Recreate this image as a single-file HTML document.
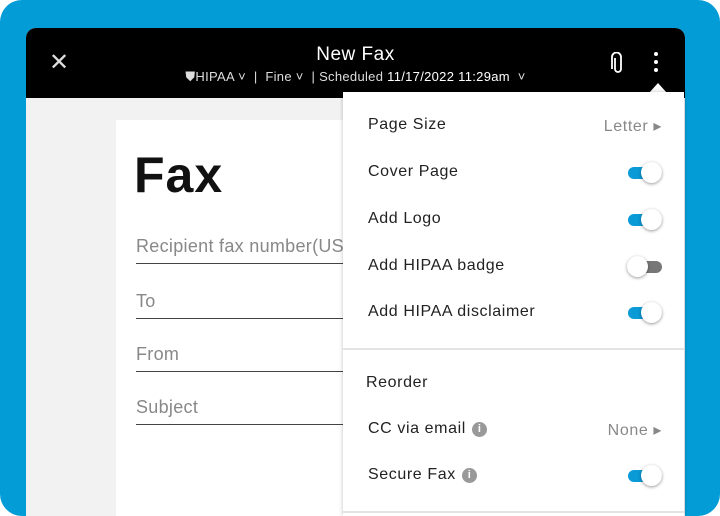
<!DOCTYPE html>
<html><head><style>
*{margin:0;padding:0;box-sizing:border-box}
html,body{width:720px;height:516px;overflow:hidden}
body{background:#fff;font-family:"Liberation Sans",sans-serif;position:relative}
.blue{position:absolute;left:0;top:0;width:720px;height:516px;background:#039cd6;border-radius:22px}
.win{position:absolute;left:26px;top:28px;width:659px;height:488px;background:#f2f2f2;border-radius:10px 10px 0 0;overflow:hidden}
.hdr{position:absolute;left:0;top:0;width:659px;height:70px;background:#000;color:#fff}
.title{position:absolute;left:0;width:659px;top:16px;text-align:center;font-size:19px;letter-spacing:.5px}
.sub{position:absolute;left:0;width:659px;top:41px;text-align:center;font-size:13px;color:#ddd;letter-spacing:.3px}
.paper{position:absolute;left:90px;top:92px;width:240px;height:396px;background:#fff}
.fax{position:absolute;left:18px;top:26px;font-size:50px;font-weight:bold;color:#111;letter-spacing:1px}
.fld{position:absolute;left:20px;width:230px;border-bottom:1px solid #444;font-size:18px;color:#888;padding-bottom:6px;letter-spacing:.3px;white-space:nowrap;overflow:hidden}
.menu{position:absolute;left:343px;top:92px;width:341px;height:424px;background:#fff;box-shadow:0 0 4px rgba(0,0,0,.25)}
.row{position:absolute;left:25px;right:22px;font-size:16px;color:#222;letter-spacing:.6px}
.row .r{position:absolute;right:0;top:0;color:#888}
.tg{position:absolute;right:0;top:-1px;width:34px;height:21px}
.tg .t{position:absolute;left:0;top:5px;width:34px;height:12px;border-radius:6px;background:#0a9ad6}
.tg .k{position:absolute;left:13px;top:0;width:21px;height:21px;border-radius:50%;background:#fff;box-shadow:0 1px 3px rgba(0,0,0,.4)}
.tg.off .t{background:#777}
.tg.off .k{left:-1px}
.i{display:inline-block;width:15px;height:15px;border-radius:50%;background:#999;color:#fff;font-size:11px;text-align:center;line-height:15px;font-weight:bold;vertical-align:1px;margin-left:6px;letter-spacing:0}
.hr{position:absolute;left:0;width:341px;height:2px;background:#e3e3e3}
</style></head><body>
<div class="blue"></div>
<div class="win">
 <div class="hdr">
  <div style="position:absolute;left:23px;top:20px;font-size:24px;color:#ddd">✕</div>
  <div class="title">New Fax</div>
  <div class="sub">⛊HIPAA ˅ &nbsp;| &nbsp;Fine ˅ &nbsp;| Scheduled <span style="color:#fff">11/17/2022 11:29am</span> &nbsp;˅</div>
  <svg style="position:absolute;left:585px;top:24px" width="14" height="24" viewBox="0 0 14 24"><path d="M4 6v11a3 3 0 0 0 6 0V5a4.5 4.5 0 0 0-9 0v12" fill="none" stroke="#fff" stroke-width="1.8"/></svg>
  <div style="position:absolute;left:628px;top:24px;width:4px">
   <div style="width:4px;height:4px;border-radius:2px;background:#fff;margin-bottom:4px"></div>
   <div style="width:4px;height:4px;border-radius:2px;background:#fff;margin-bottom:4px"></div>
   <div style="width:4px;height:4px;border-radius:2px;background:#fff"></div></div>
 </div>
 <div class="paper">
  <div class="fax">Fax</div>
  <div class="fld" style="top:116px">Recipient fax number(US</div>
  <div class="fld" style="top:171px">To</div>
  <div class="fld" style="top:224px">From</div>
  <div class="fld" style="top:277px">Subject</div>
 </div>
</div>
<div style="position:absolute;left:649px;top:83px;width:0;height:0;border-left:9px solid transparent;border-right:9px solid transparent;border-bottom:10px solid #fff"></div>
<div class="menu">
 <div class="row" style="top:24px">Page Size<span class="r">Letter ▸</span></div>
 <div class="row" style="top:71px">Cover Page<div class="tg"><div class="t"></div><div class="k"></div></div></div>
 <div class="row" style="top:118px">Add Logo<div class="tg"><div class="t"></div><div class="k"></div></div></div>
 <div class="row" style="top:165px">Add HIPAA badge<div class="tg off"><div class="t"></div><div class="k"></div></div></div>
 <div class="row" style="top:211px">Add HIPAA disclaimer<div class="tg"><div class="t"></div><div class="k"></div></div></div>
 <div class="hr" style="top:256px"></div>
 <div class="row" style="top:282px;left:23px">Reorder</div>
 <div class="row" style="top:328px">CC via email<span class="i">i</span><span class="r">None ▸</span></div>
 <div class="row" style="top:374px">Secure Fax<span class="i">i</span><div class="tg"><div class="t"></div><div class="k"></div></div></div>
 <div class="hr" style="top:419px"></div>
</div>
</body></html>
